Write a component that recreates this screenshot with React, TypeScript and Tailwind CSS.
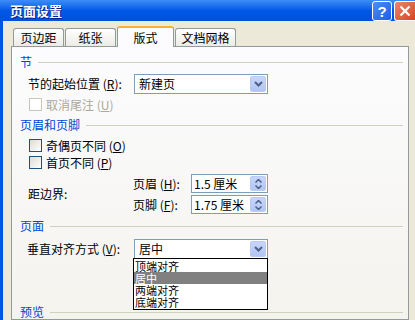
import { ReactNode } from 'react';

const cjk = { fontFamily: '"Noto Sans CJK SC", "Liberation Sans", sans-serif' };

function Section({ title, className }: { title: string; className?: string }) {
  return (
    <div className={`flex items-center h-[14px] ${className ?? ''}`}>
      <span className="text-[12px] leading-none text-[#0046D5]">{title}</span>
      <div className="flex-1 h-px bg-[#D0D0BF] ml-[6px] mr-[4px]" />
    </div>
  );
}

function Checkbox({ label, disabled }: { label: ReactNode; disabled?: boolean }) {
  return (
    <div className="flex items-center h-[13px]">
      <div
        className={`w-[13px] h-[13px] border ${
          disabled ? 'border-[#C9C7BA] bg-white' : 'border-[#1C5180] bg-gradient-to-br from-[#DCDBD5] to-white'
        }`}
      />
      <span className={`ml-[4px] text-[12px] leading-none ${disabled ? 'text-[#ACA899]' : 'text-black'}`}>{label}</span>
    </div>
  );
}

function Chevron() {
  return (
    <div className="w-[16px] h-full bg-gradient-to-b from-[#C6D5FB] to-[#B2C6F4] border border-[#B9CAF3] rounded-[2px] flex items-center justify-center">
      <svg width="9" height="6" viewBox="0 0 9 6">
        <path d="M1 1 L4.5 4.5 L8 1" fill="none" stroke="#4D6185" strokeWidth="2" />
      </svg>
    </div>
  );
}

function Select({ value }: { value: string }) {
  return (
    <div className="w-[134px] h-[20px] border border-[#7F9DB9] bg-white flex items-center pl-[4px] pr-px py-px">
      <span className="flex-1 text-[12px] leading-none text-black">{value}</span>
      <Chevron />
    </div>
  );
}

function Spinner({ value }: { value: string }) {
  return (
    <div className="w-[77px] h-[19px] border border-[#7F9DB9] bg-white flex items-center pl-[2px] pr-px py-px">
      <span className="flex-1 text-[12px] leading-none text-black whitespace-nowrap">{value}</span>
      <div className="w-[16px] h-full shrink-0 flex flex-col bg-gradient-to-b from-[#C6D5FB] to-[#B2C6F4] border border-[#B9CAF3] rounded-[2px] items-center justify-center gap-[2px]">
        <svg width="7" height="4" viewBox="0 0 7 4">
          <path d="M0.5 3.5 L3.5 0.5 L6.5 3.5" fill="none" stroke="#4D6185" strokeWidth="1.5" />
        </svg>
        <svg width="7" height="4" viewBox="0 0 7 4">
          <path d="M0.5 0.5 L3.5 3.5 L6.5 0.5" fill="none" stroke="#4D6185" strokeWidth="1.5" />
        </svg>
      </div>
    </div>
  );
}

export default function App() {
  const tabs = [
    { label: '页边距', w: 'w-[51px]' },
    { label: '纸张', w: 'w-[51px]' },
    { label: '版式', w: 'w-[57px]', active: true },
    { label: '文档网格', w: 'w-[61px]' },
  ];
  const items = ['顶端对齐', '居中', '两端对齐', '底端对齐'];

  return (
    <div className="w-[415px] h-[320px] overflow-hidden flex flex-col bg-[#0054E3]" style={cjk}>
      {/* 标题栏 */}
      <div className="h-[27px] flex items-center justify-between bg-gradient-to-b from-[#3C8CF8] via-[#0058E6] to-[#0050DC] pl-[10px]">
        <span className="text-white font-bold text-[13px] leading-none [text-shadow:1px_1px_0_#0A1E82]">页面设置</span>
        <div className="flex items-center gap-[2px] mt-[1px]">
          <div className="w-[20px] h-[20px] rounded-[3px] border border-white bg-gradient-to-br from-[#4C8DF9] to-[#1D5EE0] flex items-center justify-center text-white font-bold text-[15px] leading-none" style={{ fontFamily: '"Liberation Sans", sans-serif' }}>
            ?
          </div>
          <div className="w-[21px] h-[20px] rounded-l-[3px] border border-r-0 border-white bg-gradient-to-br from-[#E8866A] to-[#D8421C] flex items-center justify-center">
            <svg width="12" height="12" viewBox="0 0 12 12">
              <path d="M1.5 1.5 L10.5 10.5 M10.5 1.5 L1.5 10.5" stroke="white" strokeWidth="2.2" />
            </svg>
          </div>
        </div>
      </div>

      {/* 主体 */}
      <div className="flex-1 ml-[3px] bg-[#ECE9D8] pt-[5px] pl-[8px] pr-[6px] flex flex-col">
        {/* 选项卡 */}
        <div className="flex items-end h-[20px] pl-[2px] gap-[1px] relative z-10">
          {tabs.map((t) =>
            t.active ? (
              <div
                key={t.label}
                className={`${t.w} h-[21px] -mb-px bg-[#FCFCFE] border-x border-[#919B9C] border-t-2 border-t-[#F4B430] rounded-t-[3px] flex items-center justify-center text-[12px] leading-none text-black`}
              >
                {t.label}
              </div>
            ) : (
              <div
                key={t.label}
                className={`${t.w} h-[18px] bg-gradient-to-b from-white to-[#ECEBE6] border border-b-0 border-[#919B9C] rounded-t-[3px] flex items-center justify-center text-[12px] leading-none text-black`}
              >
                {t.label}
              </div>
            )
          )}
        </div>

        {/* 面板 */}
        <div className="flex-1 border border-[#919B9C] bg-gradient-to-b from-[#FCFCFE] to-[#F4F3EE] pt-[8px] pl-[8px] pr-[1px]">
          <Section title="节" />
          <div className="flex items-center mt-[5px]">
            <span className="w-[114px] pl-[8px] text-[12px] leading-none text-black">
              节的起始位置 (<u>R</u>):
            </span>
            <Select value="新建页" />
          </div>
          <div className="mt-[4px] pl-[9px]">
            <Checkbox label={<>取消尾注 (<u>U</u>)</>} disabled />
          </div>

          <Section title="页眉和页脚" className="mt-[7px]" />
          <div className="mt-[7px] pl-[9px]">
            <Checkbox label={<>奇偶页不同 (<u>O</u>)</>} />
          </div>
          <div className="mt-[4px] pl-[9px]">
            <Checkbox label={<>首页不同 (<u>P</u>)</>} />
          </div>
          <div className="mt-[5px] flex items-center">
            <span className="w-[113px] pl-[8px] text-[12px] leading-none text-black">距边界:</span>
            <div className="flex flex-col gap-[2px]">
              <div className="flex items-center">
                <span className="w-[58px] text-[12px] leading-none text-black">
                  页眉 (<u>H</u>):
                </span>
                <Spinner value="1.5 厘米" />
              </div>
              <div className="flex items-center">
                <span className="w-[58px] text-[12px] leading-none text-black">
                  页脚 (<u>F</u>):
                </span>
                <Spinner value="1.75 厘米" />
              </div>
            </div>
          </div>

          <Section title="页面" className="mt-[5px]" />
          <div className="flex items-center mt-[6px] relative">
            <span className="w-[114px] pl-[7px] text-[12px] leading-none text-black">
              垂直对齐方式 (<u>V</u>):
            </span>
            <Select value="居中" />
            <div className="absolute left-[113px] top-[19px] w-[135px] border border-black bg-white z-20 py-px">
              {items.map((it, i) => (
                <div
                  key={it}
                  className={`h-[12px] pl-[1px] flex items-center text-[11px] leading-[12px] ${
                    i === 1 ? 'bg-[#808080] text-white' : 'text-black'
                  }`}
                >
                  {it}
                </div>
              ))}
            </div>
          </div>

          <Section title="预览" className="mt-[46px]" />
        </div>
      </div>
    </div>
  );
}
